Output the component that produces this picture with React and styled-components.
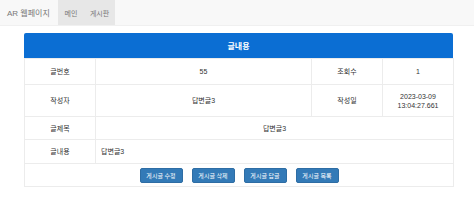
import React from 'react'
import styled, { createGlobalStyle } from 'styled-components'

const GlobalStyle = createGlobalStyle`
    html, body {
        margin: 0;
        padding: 0;
        background: #fff;
        font-family: 'Liberation Sans', 'Noto Sans CJK KR', sans-serif;
        color: #333;
    }
`

const rows = [
    { label: '글번호', value: '55', label2: '조회수', value2: '1' },
    { label: '작성자', value: '답변글3', label2: '작성일', value2: ['2023-03-09', '13:04:27.661'] },
]

const buttons = ['게시글 수정', '게시글 삭제', '게시글 답글', '게시글 목록']

function App() {
    return (
        <>
            <GlobalStyle />
            <NavBar>
                <Brand>AR 웹페이지</Brand>
                <NavMenu>
                    <NavItem>메인</NavItem>
                    <NavItem>게시판</NavItem>
                </NavMenu>
            </NavBar>
            <Container>
                <Header>글내용</Header>
                <Table>
                    <colgroup>
                        <col style={{ width: 71 }} />
                        <col style={{ width: 216 }} />
                        <col style={{ width: 71 }} />
                        <col style={{ width: 71 }} />
                    </colgroup>
                    <tbody>
                        {rows.map((r, i) => (
                            <Row key={i} $height={i === 0 ? 26 : 32}>
                                <Cell>{r.label}</Cell>
                                <Cell>{r.value}</Cell>
                                <Cell>{r.label2}</Cell>
                                <Cell>
                                    {Array.isArray(r.value2)
                                        ? r.value2.map((v) => <Line key={v}>{v}</Line>)
                                        : r.value2}
                                </Cell>
                            </Row>
                        ))}
                        <Row $height={23}>
                            <Cell>글제목</Cell>
                            <Cell colSpan={3}>답변글3</Cell>
                        </Row>
                        <Row $height={24}>
                            <Cell>글내용</Cell>
                            <Cell colSpan={3} $left>답변글3</Cell>
                        </Row>
                        <Row $height={23}>
                            <Cell colSpan={4}>
                                <ButtonRow>
                                    {buttons.map((b) => (
                                        <Button key={b}>{b}</Button>
                                    ))}
                                </ButtonRow>
                            </Cell>
                        </Row>
                    </tbody>
                </Table>
            </Container>
        </>
    )
}

const NavBar = styled.nav`
    display: flex;
    align-items: stretch;
    height: 25px;
    background: #f8f8f8;
    border-bottom: 1px solid #f0f0f0;
`

const Brand = styled.div`
    box-sizing: border-box;
    display: flex;
    align-items: center;
    padding: 0 0 0 7px;
    font-size: 8px;
    color: #777;
    width: 58px;
    white-space: nowrap;
`

const NavMenu = styled.ul`
    display: flex;
    margin: 0;
    padding: 0;
    list-style: none;
    background: #e7e7e7;
`

const NavItem = styled.li`
    display: flex;
    align-items: center;
    padding: 0 6px 0 6.5px;
    font-size: 7px;
    color: #777;
`

const Container = styled.div`
    width: 429px;
    margin: 7px 0 0 24px;
`

const Header = styled.div`
    height: 25px;
    display: flex;
    align-items: center;
    justify-content: center;
    background: #0b6ed3;
    border-radius: 2px 2px 0 0;
    color: #fff;
    font-weight: bold;
    font-size: 8px;
`

const Table = styled.table`
    width: 100%;
    table-layout: fixed;
    border-collapse: collapse;
    border: 1px solid #f0f0f0;
    border-top: none;
    font-size: 7px;
`

const Row = styled.tr`
    height: ${(p) => p.$height}px;
`

const Cell = styled.td`
    padding: 0 5px;
    border: 1px solid #ececec;
    text-align: ${(p) => (p.$left ? 'left' : 'center')};
    vertical-align: middle;
    line-height: 9px;
    color: #333;
`

const Line = styled.div`
    white-space: nowrap;
`

const ButtonRow = styled.div`
    display: flex;
    justify-content: center;
    gap: 9px;
`

const Button = styled.button`
    width: 43px;
    height: 15px;
    padding: 0;
    background: #337ab7;
    border: 1px solid #2e6da4;
    border-radius: 2px;
    color: #fff;
    font-family: 'Liberation Sans', 'Noto Sans CJK KR', sans-serif;
    font-size: 6px;
`

export default App
